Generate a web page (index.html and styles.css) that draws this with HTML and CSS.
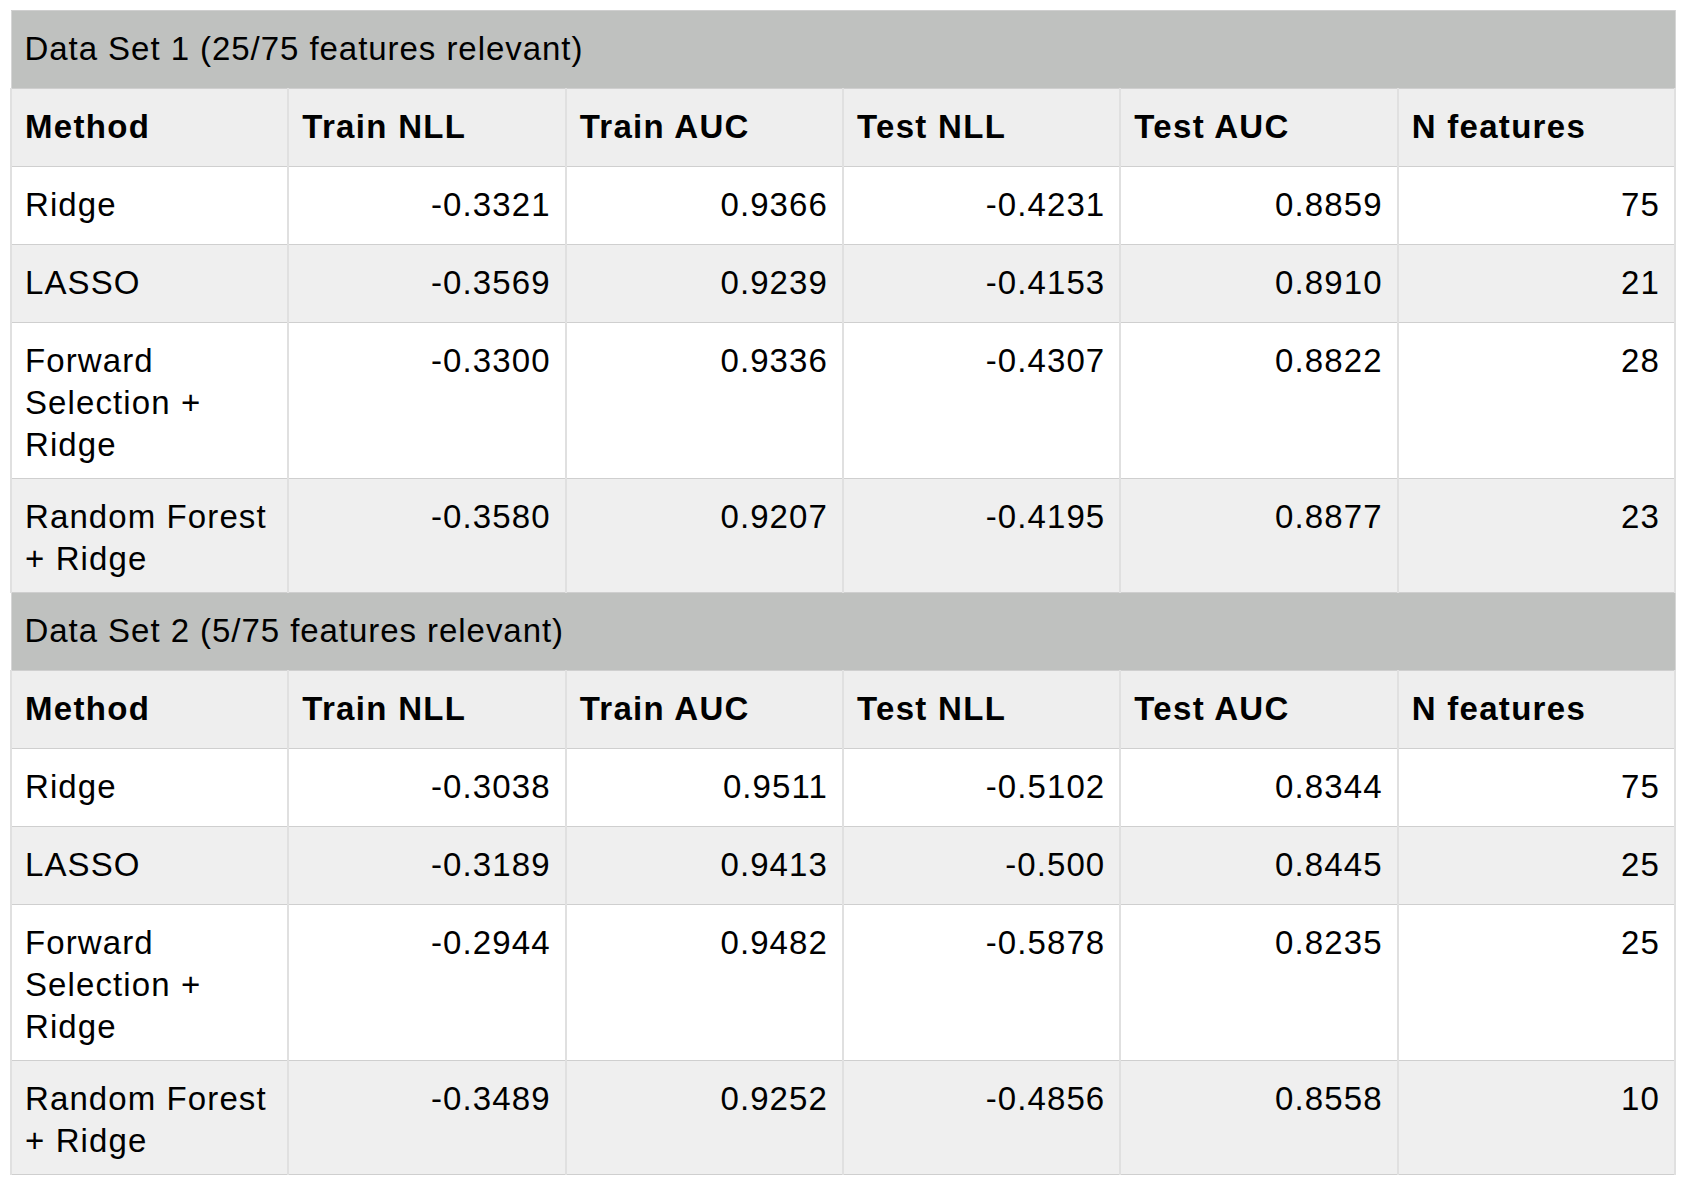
FILE: index.html
```html
<!DOCTYPE html>
<html>
<head>
<meta charset="utf-8">
<link rel="stylesheet" href="styles.css">
</head>
<body>
<div class="page">
<table class="results">
  <colgroup>
    <col><col><col><col><col><col>
  </colgroup>
  <tbody>
    <tr class="title"><td colspan="6">Data Set 1 (25/75 features relevant)</td></tr>
    <tr class="head">
      <th>Method</th><th>Train NLL</th><th>Train AUC</th><th>Test NLL</th><th>Test AUC</th><th>N features</th>
    </tr>
    <tr class="odd"><td class="name">Ridge</td><td>-0.3321</td><td>0.9366</td><td>-0.4231</td><td>0.8859</td><td>75</td></tr>
    <tr class="even"><td class="name">LASSO</td><td>-0.3569</td><td>0.9239</td><td>-0.4153</td><td>0.8910</td><td>21</td></tr>
    <tr class="odd"><td class="name">Forward<br>Selection +<br>Ridge</td><td>-0.3300</td><td>0.9336</td><td>-0.4307</td><td>0.8822</td><td>28</td></tr>
    <tr class="even"><td class="name">Random Forest<br>+ Ridge</td><td>-0.3580</td><td>0.9207</td><td>-0.4195</td><td>0.8877</td><td>23</td></tr>

    <tr class="title"><td colspan="6">Data Set 2 (5/75 features relevant)</td></tr>
    <tr class="head">
      <th>Method</th><th>Train NLL</th><th>Train AUC</th><th>Test NLL</th><th>Test AUC</th><th>N features</th>
    </tr>
    <tr class="odd"><td class="name">Ridge</td><td>-0.3038</td><td>0.9511</td><td>-0.5102</td><td>0.8344</td><td>75</td></tr>
    <tr class="even"><td class="name">LASSO</td><td>-0.3189</td><td>0.9413</td><td>-0.500</td><td>0.8445</td><td>25</td></tr>
    <tr class="odd"><td class="name">Forward<br>Selection +<br>Ridge</td><td>-0.2944</td><td>0.9482</td><td>-0.5878</td><td>0.8235</td><td>25</td></tr>
    <tr class="even"><td class="name">Random Forest<br>+ Ridge</td><td>-0.3489</td><td>0.9252</td><td>-0.4856</td><td>0.8558</td><td>10</td></tr>
  </tbody>
</table>
</div>
</body>
</html>
```

FILE: styles.css
```css
html, body {
  margin: 0;
  padding: 0;
  background: #ffffff;
}

.page {
  padding: 10px 0 0 10px;
}

.results {
  width: 1666px;
  table-layout: fixed;
  border-collapse: collapse;
  font-family: "Liberation Sans", Arial, Helvetica, sans-serif;
  font-size: 33px;
  letter-spacing: 1.1px;
  color: #000000;
}

.results td,
.results th {
  padding: 17px 14px 12px 13px;
  line-height: 42px;
  vertical-align: top;
  text-align: right;
  border-top: 1px solid #cfcfcf;
  border-bottom: 1px solid #cfcfcf;
  border-left: 2px solid #e0e0e0;
  border-right: 2px solid #e0e0e0;
  white-space: nowrap;
}

.results tr {
  height: 78px;
}

.results .title td {
  background: #bfc1bf;
  text-align: left;
  font-weight: normal;
  letter-spacing: 0.95px;
  border-left: 1px solid #d6d6d6;
  border-right: 1px solid #d6d6d6;
}

.results .head th {
  background: #eeeeee;
  text-align: left;
  font-weight: bold;
  letter-spacing: 1.3px;
}

.results .odd td {
  background: #ffffff;
}

.results .even td {
  background: #efefef;
}

.results td.name {
  text-align: left;
}
```
